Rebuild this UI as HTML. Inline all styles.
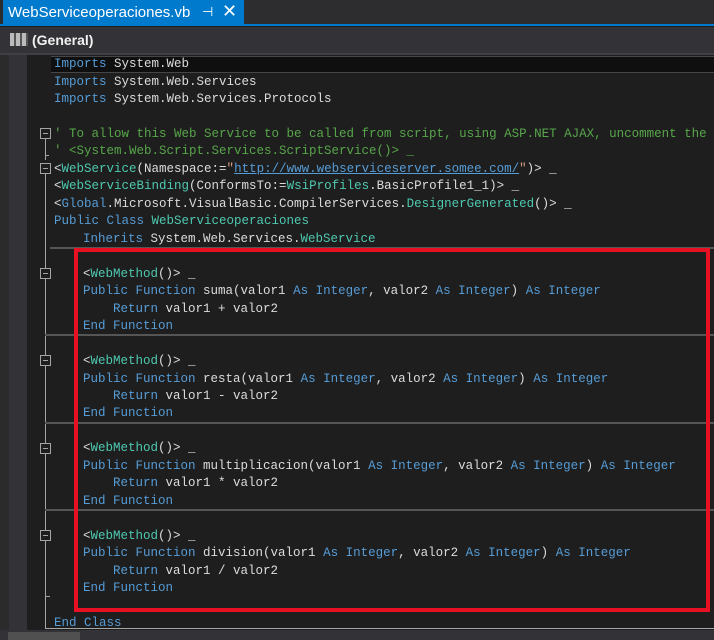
<!DOCTYPE html>
<html><head><style>
body{margin:0;width:714px;height:640px;overflow:hidden;background:#1e1e1e;position:relative;font-family:"Liberation Sans",sans-serif}
.abs{position:absolute}
.ln{position:absolute;font-family:"Liberation Mono",monospace;font-size:12.5px;color:#dcdcdc;white-space:pre;line-height:17.5px;height:17.5px;margin-top:2px}
.k{color:#569cd6}.t{color:#4ec9b0}.c{color:#57a64a}.s{color:#d69d85}.u{color:#569cd6;text-decoration:underline}
.box{position:absolute;left:40px;width:9px;height:9px;border:1px solid #a5a5a5;background:#1e1e1e}
.box:after{content:"";position:absolute;left:2px;top:4px;width:5px;height:1px;background:#a5a5a5}
.sep{position:absolute;left:45px;right:0;height:2px;background:#555}
#clip{position:absolute;left:0;top:0;width:714px;height:640px;overflow:hidden}
</style></head><body>
<div id="clip">
<div class="abs" style="left:0;top:0;width:714px;height:26px;background:#2d2d30"></div>
<div class="abs" style="left:3px;top:0;width:241px;height:25px;background:#007acc"></div>
<div class="abs" style="left:0;top:24px;width:714px;height:2px;background:#007acc"></div>
<div class="abs" style="left:8px;top:4px;color:#fff;font-size:15px;white-space:nowrap">WebServiceoperaciones.vb</div>
<div class="abs" style="left:202px;top:4px;color:#fff;font-size:13px">⊣</div>
<div class="abs" style="left:222px;top:1px;color:#fff;font-size:18px">✕</div>
<div class="abs" style="left:0;top:27px;width:714px;height:26px;background:#333337"></div>
<div class="abs" style="left:0;top:53px;width:714px;height:2px;background:#3f3f46"></div>
<div class="abs" style="left:10px;top:33px;width:18px;height:13px;background:repeating-linear-gradient(90deg,#bbb 0 4px,#555 4px 6px)"></div>
<div class="abs" style="left:32px;top:32px;color:#f1f1f1;font-size:14px;font-weight:bold">(General)</div>
<div class="abs" style="left:0;top:55px;width:9px;height:575px;background:#2b2b2b"></div>
<div class="abs" style="left:9px;top:55px;width:18px;height:575px;background:#333337"></div>
<div class="abs" style="left:51px;top:56px;width:663px;height:15px;background:#0f0f0f;border-top:1px solid #464646;border-bottom:1px solid #464646"></div>
<div class="abs" style="left:0;top:630px;width:714px;height:10px;background:#333337"></div>
<div class="abs" style="left:8px;top:632px;width:72px;height:8px;background:#505050"></div>
<div class="abs" style="left:45px;top:138px;width:1px;height:22px;background:#a5a5a5"></div>
<div class="abs" style="left:45px;top:155px;width:4px;height:1px;background:#a5a5a5"></div>
<div class="abs" style="left:45px;top:173px;width:1px;height:456px;background:#a5a5a5"></div>
<div class="abs" style="left:45px;top:628px;width:669px;height:1px;background:#a5a5a5"></div>
<div class="abs" style="left:45px;top:596px;width:5px;height:1px;background:#a5a5a5"></div>
<div class="sep" style="top:247px;left:50px"></div>
<div class="sep" style="top:334px"></div>
<div class="sep" style="top:422px"></div>
<div class="sep" style="top:509px"></div>
<div class="box" style="top:128px"></div>
<div class="box" style="top:163px"></div>
<div class="box" style="top:268px"></div>
<div class="box" style="top:355px"></div>
<div class="box" style="top:443px"></div>
<div class="box" style="top:530px"></div>

<div class="ln" style="left:54px;top:54px"><span class="k">Imports</span> System.Web</div>
<div class="ln" style="left:54px;top:72px"><span class="k">Imports</span> System.Web.Services</div>
<div class="ln" style="left:54px;top:89px"><span class="k">Imports</span> System.Web.Services.Protocols</div>
<div class="ln c" style="left:54px;top:124px">' To allow this Web Service to be called from script, using ASP.NET AJAX, uncomment the</div>
<div class="ln c" style="left:54px;top:141px">' &lt;System.Web.Script.Services.ScriptService()&gt; _</div>
<div class="ln" style="left:54px;top:159px">&lt;<span class="t">WebService</span>(Namespace:=<span class="s">"</span><span class="u">http://www.webserviceserver.somee.com/</span><span class="s">"</span>)&gt; _</div>
<div class="ln" style="left:54px;top:176px">&lt;<span class="t">WebServiceBinding</span>(ConformsTo:=<span class="t">WsiProfiles</span>.BasicProfile1_1)&gt; _</div>
<div class="ln" style="left:54px;top:194px">&lt;<span class="k">Global</span>.Microsoft.VisualBasic.CompilerServices.<span class="t">DesignerGenerated</span>()&gt; _</div>
<div class="ln" style="left:54px;top:211px"><span class="k">Public Class</span> <span class="t">WebServiceoperaciones</span></div>
<div class="ln" style="left:83px;top:229px"><span class="k">Inherits</span> System.Web.Services.<span class="t">WebService</span></div>

<div class="ln" style="left:83px;top:264px">&lt;<span class="t">WebMethod</span>()&gt; _</div>
<div class="ln" style="left:83px;top:281px"><span class="k">Public Function</span> suma(valor1 <span class="k">As</span> <span class="k">Integer</span>, valor2 <span class="k">As</span> <span class="k">Integer</span>) <span class="k">As</span> <span class="k">Integer</span></div>
<div class="ln" style="left:113px;top:299px"><span class="k">Return</span> valor1 + valor2</div>
<div class="ln" style="left:83px;top:316px"><span class="k">End Function</span></div>

<div class="ln" style="left:83px;top:351px">&lt;<span class="t">WebMethod</span>()&gt; _</div>
<div class="ln" style="left:83px;top:369px"><span class="k">Public Function</span> resta(valor1 <span class="k">As</span> <span class="k">Integer</span>, valor2 <span class="k">As</span> <span class="k">Integer</span>) <span class="k">As</span> <span class="k">Integer</span></div>
<div class="ln" style="left:113px;top:386px"><span class="k">Return</span> valor1 - valor2</div>
<div class="ln" style="left:83px;top:403px"><span class="k">End Function</span></div>

<div class="ln" style="left:83px;top:438px">&lt;<span class="t">WebMethod</span>()&gt; _</div>
<div class="ln" style="left:83px;top:456px"><span class="k">Public Function</span> multiplicacion(valor1 <span class="k">As</span> <span class="k">Integer</span>, valor2 <span class="k">As</span> <span class="k">Integer</span>) <span class="k">As</span> <span class="k">Integer</span></div>
<div class="ln" style="left:113px;top:473px"><span class="k">Return</span> valor1 * valor2</div>
<div class="ln" style="left:83px;top:491px"><span class="k">End Function</span></div>

<div class="ln" style="left:83px;top:526px">&lt;<span class="t">WebMethod</span>()&gt; _</div>
<div class="ln" style="left:83px;top:543px"><span class="k">Public Function</span> division(valor1 <span class="k">As</span> <span class="k">Integer</span>, valor2 <span class="k">As</span> <span class="k">Integer</span>) <span class="k">As</span> <span class="k">Integer</span></div>
<div class="ln" style="left:113px;top:561px"><span class="k">Return</span> valor1 / valor2</div>
<div class="ln" style="left:83px;top:578px"><span class="k">End Function</span></div>
<div class="ln" style="left:54px;top:613px"><span class="k">End Class</span></div>

<div class="abs" style="left:74px;top:248px;width:628px;height:356px;border:4px solid #e81123"></div>
</div>
</body></html>
